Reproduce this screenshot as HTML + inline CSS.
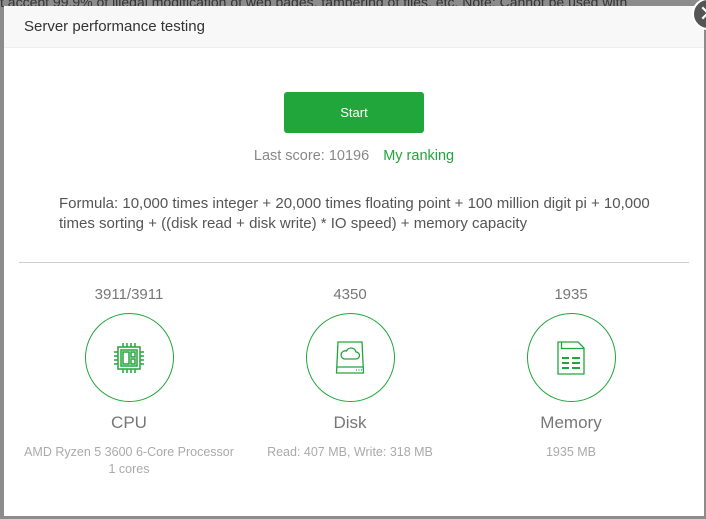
<!DOCTYPE html>
<html><head><meta charset="utf-8"><style>
*{margin:0;padding:0;box-sizing:border-box}
body{width:706px;height:519px;background:#8c8c8c;position:relative;overflow:hidden;font-family:"Liberation Sans",sans-serif}
.bgtext{position:absolute;left:0;top:-6px;color:#333;font-size:14px;white-space:nowrap}
.modal{position:absolute;left:4px;top:6px;width:700px;height:510px;background:#fff}
.hdr{height:42px;background:#f8f8f8;border-bottom:1px solid #eee;padding-left:20px;line-height:41px;font-size:15px;color:#333}
.close{position:absolute;left:688px;top:-8px;width:32px;height:32px;border-radius:50%;background:#555;border:2px solid #fff;color:#fff;font-size:22px;line-height:27px;text-align:center}
.btn{position:absolute;left:280px;top:86px;width:140px;height:41px;background:#21a63b;border-radius:3px;color:#fff;font-size:13px;text-align:center;line-height:41px}
.score{position:absolute;left:0;width:700px;top:142px;text-align:center;font-size:14.5px;color:#888}
.score span{color:#21a63b;margin-left:10px}
.formula{position:absolute;left:55px;top:188px;width:615px;font-size:15px;line-height:20px;color:#555}
.hr{position:absolute;left:15px;top:256px;width:670px;height:1px;background:#cfcbdb}
.col{position:absolute;top:280px;width:240px;text-align:center}
.num{font-size:15px;color:#777;height:20px}
.circ{width:89px;height:89px;border:1.5px solid #21a63b;border-radius:50%;margin:7px auto 0;display:flex;align-items:center;justify-content:center}
.name{font-size:17px;color:#777;margin-top:11px}
.desc{font-size:12.5px;color:#aaa;margin-top:11px;line-height:17px}
</style></head><body>
<div class="bgtext">t accept 99.9% of illegal modification of web pages, tampering of files, etc. Note: Cannot be used with</div>
<div class="modal">
<div class="hdr">Server performance testing</div>
<div class="btn">Start</div>
<div class="score">Last score: 10196 <span>My ranking</span></div>
<div class="formula">Formula: 10,000 times integer + 20,000 times floating point + 100 million digit pi + 10,000 times sorting + ((disk read + disk write) * IO speed) + memory capacity</div>
<div class="hr"></div>
<div class="col" style="left:5px">
<div class="num">3911/3911</div>
<div class="circ"><svg width="34" height="34" viewBox="0 0 34 34" fill="none" stroke="#21a63b" stroke-width="1.5"><rect x="6" y="6" width="22" height="22"/><rect x="9" y="9" width="16" height="16"/><rect x="11" y="11" width="6" height="12"/><rect x="19" y="11" width="4" height="5"/><rect x="19" y="18" width="4" height="5"/><path d="M11 2v4M15 2v4M19 2v4M23 2v4M11 28v4M15 28v4M19 28v4M23 28v4M2 11h4M2 15h4M2 19h4M2 23h4M28 11h4M28 15h4M28 19h4M28 23h4"/></svg></div>
<div class="name">CPU</div>
<div class="desc">AMD Ryzen 5 3600 6-Core Processor<br>1 cores</div>
</div>
<div class="col" style="left:226px">
<div class="num">4350</div>
<div class="circ"><svg width="30" height="36" viewBox="0 0 30 36" fill="none" stroke="#21a63b" stroke-width="1.3"><path d="M3 2h24l1.5 31h-27z"/><path d="M1.5 27h27"/><path d="M9 19h12a3.5 3.5 0 0 0 0-7 5 5 0 0 0-9.5-1A4 4 0 0 0 9 19z"/><path d="M21 30h1M23.5 30h1M26 30h1"/></svg></div>
<div class="name">Disk</div>
<div class="desc">Read: 407 MB, Write: 318 MB</div>
</div>
<div class="col" style="left:447px">
<div class="num">1935</div>
<div class="circ"><svg width="30" height="36" viewBox="0 0 30 36" fill="none" stroke="#21a63b" stroke-width="1.3"><path d="M2 2h20l6 6v26H2z"/><path d="M5.5 2v6.5h22.5" /><path d="M6 18h7M16 18h8M6 23h7M16 23h8M6 28h7M16 28h8" stroke-width="2"/></svg></div>
<div class="name">Memory</div>
<div class="desc">1935 MB</div>
</div>
<div class="close">✕</div>
</div>
</body></html>
